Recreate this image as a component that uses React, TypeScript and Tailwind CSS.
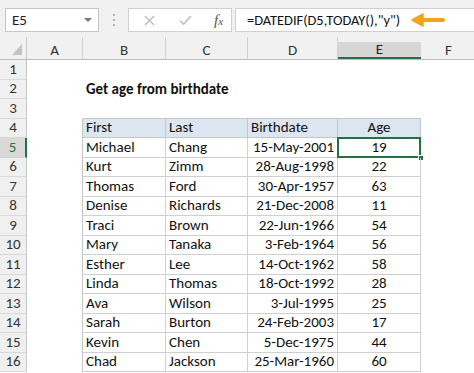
import React from "react";

const rows: [string, string, string, string][] = [
  ["Michael", "Chang", "15-May-2001", "19"],
  ["Kurt", "Zimm", "28-Aug-1998", "22"],
  ["Thomas", "Ford", "30-Apr-1957", "63"],
  ["Denise", "Richards", "21-Dec-2008", "11"],
  ["Traci", "Brown", "22-Jun-1966", "54"],
  ["Mary", "Tanaka", "3-Feb-1964", "56"],
  ["Esther", "Lee", "14-Oct-1962", "58"],
  ["Linda", "Thomas", "18-Oct-1992", "28"],
  ["Ava", "Wilson", "3-Jul-1995", "25"],
  ["Sarah", "Burton", "24-Feb-2003", "17"],
  ["Kevin", "Chen", "5-Dec-1975", "44"],
  ["Chad", "Jackson", "25-Mar-1960", "60"],
];

function RowNum({ n, sel }: { n: number; sel?: boolean }) {
  return (
    <div
      className={
        sel
          ? "w-[27px] shrink-0 flex items-center justify-center bg-[#d9d9d9] text-[#217346] border-r-2 border-r-[#217346] border-b border-b-[#d4d4d4]"
          : "w-[27px] shrink-0 flex items-center justify-center bg-[#f0f0f0] text-[#333] border-r border-r-[#c8c8c8] border-b border-b-[#d9d9d9]"
      }
    >
      {n}
    </div>
  );
}

export default function App() {
  return (
    <div className="w-[474px] h-[373px] overflow-hidden bg-white text-[15px] text-[#111] font-['Carlito','Lato',sans-serif] leading-none">
      {/* toolbar */}
      <div className="h-[37px] bg-[#f1f1f1] flex items-start pt-[8px]">
        <div className="ml-[5px] w-[94px] h-[24px] bg-white border border-[#c6c6c6] flex items-center justify-between pl-[6px] pr-[6px]">
          <span className="text-[#222]">E5</span>
          <svg width="8" height="5" viewBox="0 0 8 5">
            <path d="M0 0 L8 0 L4 4 Z" fill="#777" />
          </svg>
        </div>
        <div className="w-[29px] h-[24px] flex flex-col items-center justify-center gap-[3px]">
          <div className="w-[2px] h-[2px] bg-[#b0b0b0]" />
          <div className="w-[2px] h-[2px] bg-[#b0b0b0]" />
          <div className="w-[2px] h-[2px] bg-[#b0b0b0]" />
        </div>
        <div className="w-[104px] h-[24px] bg-white border border-[#d0d0d0] flex items-center pl-[15px]">
          <svg width="11" height="11" viewBox="0 0 12 12">
            <path d="M1 1 L11 11 M11 1 L1 11" stroke="#bdbdbd" strokeWidth="1.5" />
          </svg>
          <svg width="13" height="11" viewBox="0 0 14 12" className="ml-[24px]">
            <path d="M1 6 L5 10 L13 1" stroke="#bdbdbd" strokeWidth="1.6" fill="none" />
          </svg>
          <span className="ml-[22px] italic font-['Liberation_Serif',serif] text-[15px] text-[#555]">
            f<span className="text-[11px]">x</span>
          </span>
        </div>
        <div className="ml-[3px] flex-1 h-[24px] bg-white border border-[#d0d0d0] border-r-0 flex items-center pl-[11px]">
          <span className="text-[#111] text-[14.4px]">=DATEDIF(D5,TODAY(),"y")</span>
          <svg width="34" height="14" viewBox="0 0 34 14" className="ml-[11px]">
            <path d="M32 7 L12 7" stroke="#f5a21b" strokeWidth="4" strokeLinecap="round" />
            <path d="M1 7 L12 1 L12 13 Z" fill="#f5a21b" stroke="#f5a21b" strokeWidth="1.5" strokeLinejoin="round" />
          </svg>
        </div>
      </div>

      {/* column headers */}
      <div className="h-[23px] flex bg-[#f1f1f1] border-b border-[#bdbdbd] text-[#333]">
        <div className="w-[27px] shrink-0 border-r border-[#c8c8c8] flex items-end justify-end pr-[4px] pb-[4px]">
          <svg width="10" height="11" viewBox="0 0 10 11">
            <path d="M10 0 L10 11 L0 11 Z" fill="#c3c3c3" />
          </svg>
        </div>
        <div className="w-[56px] shrink-0 border-r border-[#d0d0d0] flex items-center justify-center pt-[5px]">A</div>
        <div className="w-[83px] shrink-0 border-r border-[#d0d0d0] flex items-center justify-center pt-[5px]">B</div>
        <div className="w-[82px] shrink-0 border-r border-[#d0d0d0] flex items-center justify-center pt-[5px]">C</div>
        <div className="w-[90px] shrink-0 border-r border-[#d0d0d0] flex items-center justify-center pt-[5px]">D</div>
        <div className="w-[83px] shrink-0 mt-[5px] bg-[#d6d6d6] border-b-2 border-[#217346] flex items-center justify-center text-[#222]">E</div>
        <div className="flex-1 flex items-center justify-center pt-[5px] pl-[2px]">F</div>
      </div>

      {/* rows 1-3 */}
      <div className="h-[19.5px] flex">
        <RowNum n={1} />
        <div className="flex-1" />
      </div>
      <div className="h-[19.5px] flex">
        <RowNum n={2} />
        <div className="w-[56px] shrink-0" />
        <div className="flex-1 flex items-center pl-[3px] font-bold">Get age from birthdate</div>
      </div>
      <div className="h-[19.5px] flex">
        <RowNum n={3} />
        <div className="w-[56px] shrink-0" />
        <div className="w-[83px] shrink-0 border-b border-[#c6c6c6]" />
        <div className="w-[82px] shrink-0 border-b border-[#c6c6c6]" />
        <div className="w-[90px] shrink-0 border-b border-[#c6c6c6]" />
        <div className="w-[83px] shrink-0 border-b border-[#c6c6c6]" />
      </div>

      {/* row 4 header */}
      <div className="h-[19.5px] flex">
        <RowNum n={4} />
        <div className="w-[56px] shrink-0 border-r border-[#c6c6c6]" />
        <div className="w-[83px] shrink-0 bg-[#dce6f1] border-r border-b border-[#c6c6c6] flex items-center pl-[3px]">First</div>
        <div className="w-[82px] shrink-0 bg-[#dce6f1] border-r border-b border-[#c6c6c6] flex items-center pl-[3px]">Last</div>
        <div className="w-[90px] shrink-0 bg-[#dce6f1] border-r border-b border-[#c6c6c6] flex items-center pl-[3px]">Birthdate</div>
        <div className="w-[83px] shrink-0 bg-[#dce6f1] border-r border-b border-[#c6c6c6] flex items-center justify-center">Age</div>
      </div>

      {rows.map((r, i) => {
        const n = i + 5;
        const sel = n === 5;
        return (
          <div key={n} className="h-[19.5px] flex">
            <RowNum n={n} sel={sel} />
            <div className="w-[56px] shrink-0 border-r border-[#c6c6c6]" />
            <div className="w-[83px] shrink-0 border-r border-b border-[#d0d0d0] flex items-center pl-[3px]">{r[0]}</div>
            <div className="w-[82px] shrink-0 border-r border-b border-[#d0d0d0] flex items-center pl-[3px]">{r[1]}</div>
            <div className="w-[90px] shrink-0 border-r border-b border-[#d0d0d0] flex items-center justify-end pr-[3px]">{r[2]}</div>
            <div className="relative w-[83px] shrink-0 border-r border-b border-[#d0d0d0] flex items-center justify-center">
              {r[3]}
              {sel && (
                <>
                  <div className="absolute -left-[1px] -top-[1px] -right-[1px] -bottom-[1px] border-2 border-[#217346]" />
                  <div className="absolute -right-[4px] -bottom-[4px] w-[6px] h-[6px] bg-[#217346] border border-white" />
                </>
              )}
            </div>
          </div>
        );
      })}
    </div>
  );
}
